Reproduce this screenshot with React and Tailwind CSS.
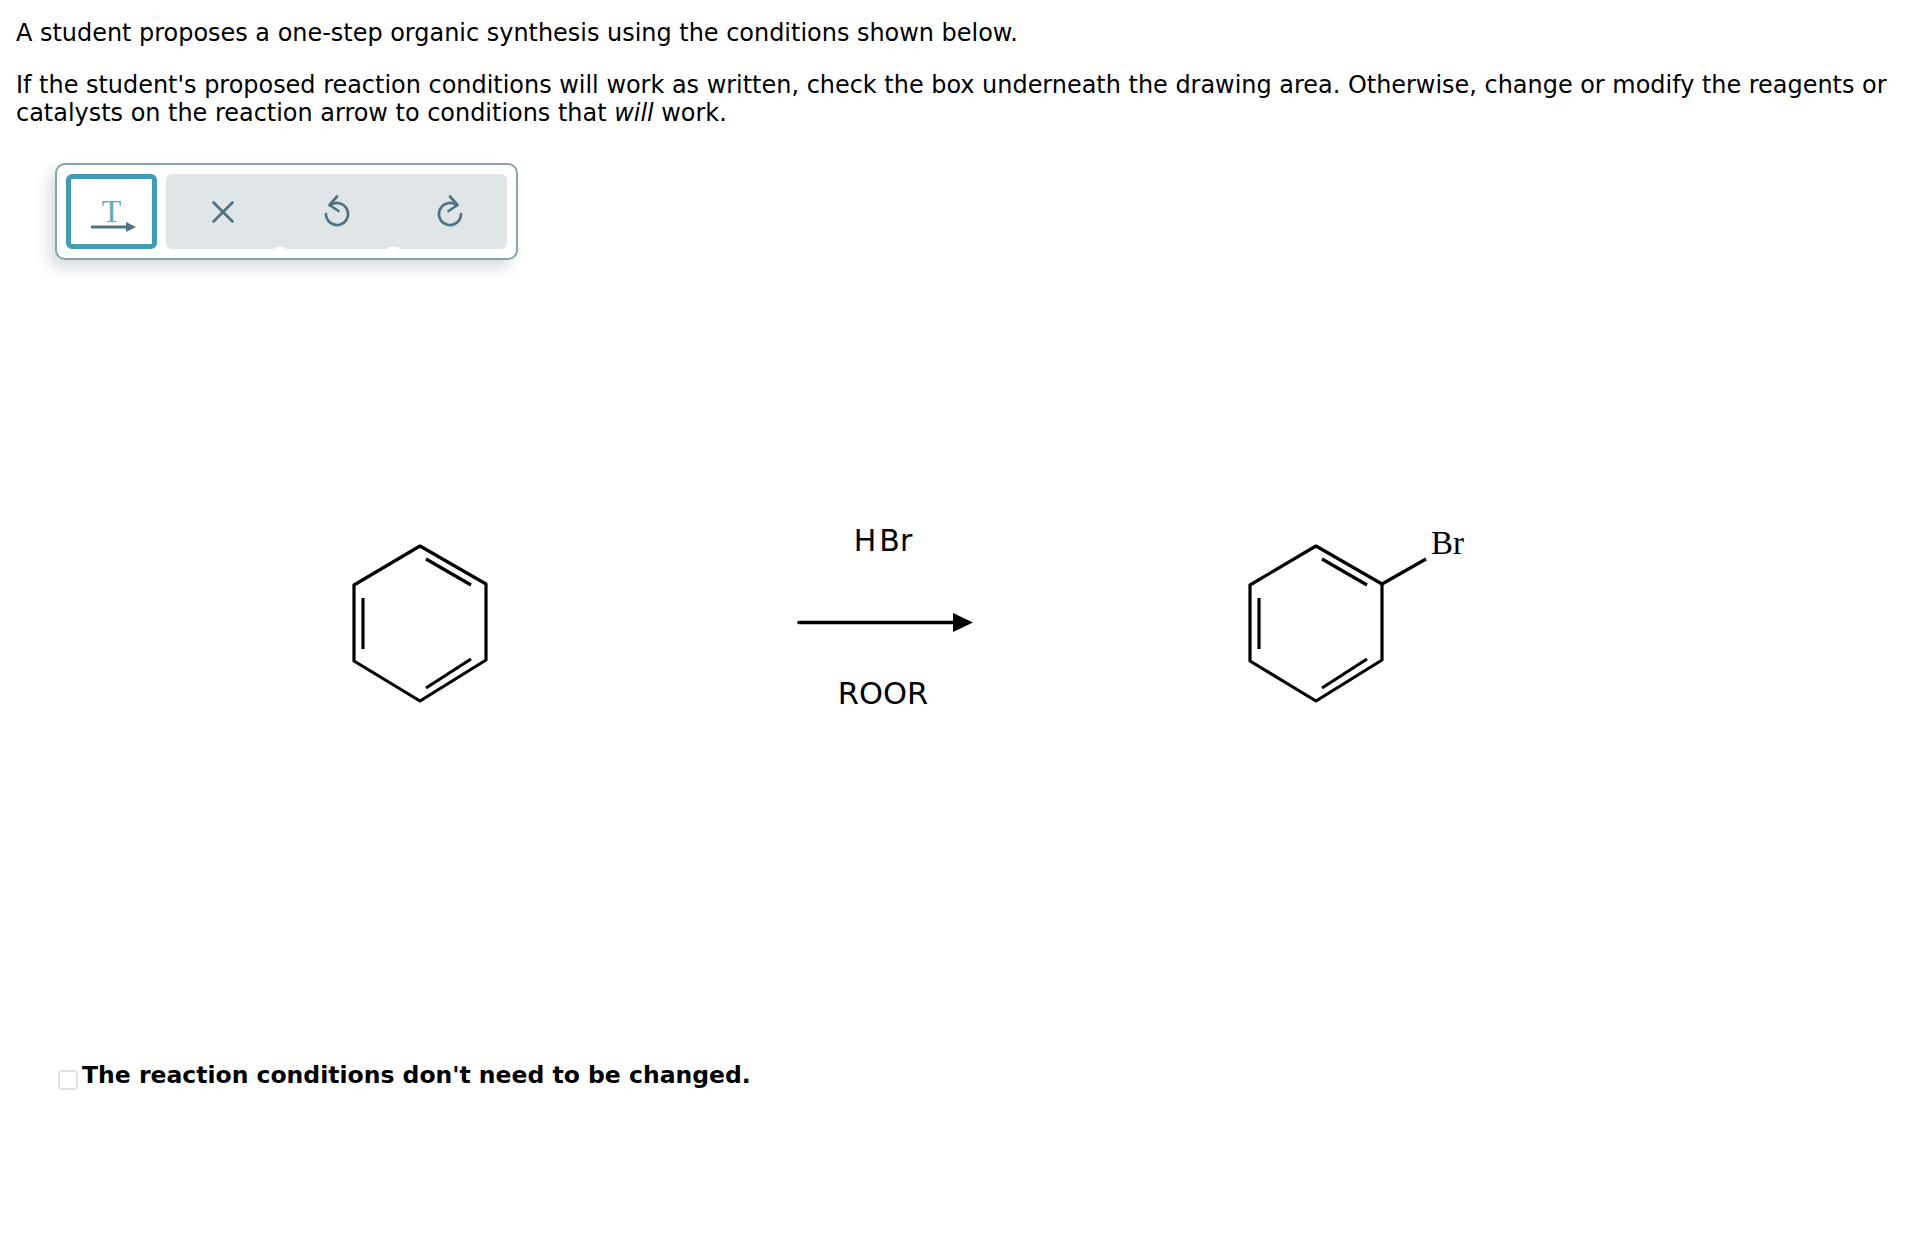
import React from 'react';

const ICON = '#4f7380';

const Hexagon = ({ x }) => (
  <g transform={`translate(${x} 0)`} fill="none" stroke="#000" strokeWidth="3.2" strokeLinejoin="round">
    <path d="M0 545 L66 583 L66 659 L0 700 L-66 660 L-66 584 Z" />
    <path d="M6 558 L51 584" />
    <path d="M-57 597 L-57 648" />
    <path d="M6 687 L51 658" />
  </g>
);

const ReactionCanvas = () => (
  <svg width="1926" height="801" viewBox="0 259 1926 801" className="block">
    <Hexagon x={420} />
    <path d="M799 621.5 L955 621.5" stroke="#000" strokeWidth="3.6" strokeLinecap="round" />
    <path d="M953 612 L973 621.5 L953 631 Z" fill="#000" />
    <text x="883" y="550" textAnchor="middle" fontFamily="'DejaVu Sans', sans-serif" fontSize="30" fill="#000">
      H<tspan dx="3">Br</tspan>
    </text>
    <text x="883" y="703" textAnchor="middle" fontFamily="'DejaVu Sans', sans-serif" fontSize="30.5" fill="#000">ROOR</text>
    <Hexagon x={1316} />
    <path d="M1382 583 L1426 558" stroke="#000" strokeWidth="3.2" />
    <text x="1431" y="553" fontFamily="'Liberation Serif', serif" fontSize="33" fill="#000">Br</text>
  </svg>
);

const ToolIcon = ({ children }) => (
  <div className="flex-1 h-full flex items-center justify-center">
    <svg width="40" height="44" viewBox="-20 -22 40 44" fill="none" stroke={ICON} strokeWidth="2.7" strokeLinecap="round" strokeLinejoin="round">
      {children}
    </svg>
  </div>
);

const App = () => (
  <div className="w-[1926px] h-[1250px] bg-white overflow-hidden text-black font-['DejaVu_Sans',sans-serif]">
    <div className="px-4 pt-[19px] text-[23.95px] leading-[28px]">
      <p>A student proposes a one-step organic synthesis using the conditions shown below.</p>
      <p className="mt-6">
        If the student's proposed reaction conditions will work as written, check the box underneath the drawing area. Otherwise, change or modify the reagents or catalysts on the reaction arrow to conditions that <em>will</em> work.
      </p>
    </div>

    <div className="ml-[55px] mt-[36px] w-[463px] h-[97px] pt-[9px] px-[9px] flex gap-[9px] bg-white border-2 border-[#8aa2ad] rounded-[10px] shadow-[-6px_8px_14px_rgba(70,90,100,0.2)]">
      <div className="w-[91px] h-[75px] border-[5px] border-[#439cb7] rounded-[6px] flex flex-col items-center bg-white">
        <span className="font-['Liberation_Serif',serif] text-[#55aec8] text-[32px] leading-[24px] mt-[20px]">T</span>
        <svg width="46" height="12" viewBox="0 0 46 12" className="-mt-[2px] ml-[4px]">
          <path d="M0 6 L36 6" stroke={ICON} strokeWidth="3" />
          <path d="M35 1 L45 6 L35 11 Z" fill={ICON} />
        </svg>
      </div>
      <div className="relative flex-1 h-[75px] flex bg-[#e0e5e7] rounded-[6px]">
        <ToolIcon>
          <path d="M-9.5 -9.5 L9.5 9.5 M9.5 -9.5 L-9.5 9.5" />
        </ToolIcon>
        <ToolIcon>
          <path d="M-7 -6.5 A11 11 0 1 1 -11 2" />
          <path d="M0 -15.5 L-7.5 -7 L1.5 -1" />
        </ToolIcon>
        <ToolIcon>
          <path d="M7 -6.5 A11 11 0 1 0 11 2" />
          <path d="M0 -15.5 L7.5 -7 L-1.5 -1" />
        </ToolIcon>
        <span className="absolute bottom-0 left-[108px] w-3 h-[2px] rounded-t-full bg-white" />
        <span className="absolute bottom-0 left-[221px] w-3 h-[2px] rounded-t-full bg-white" />
      </div>
    </div>

    <ReactionCanvas />

    <label className="ml-[58px] flex items-start gap-[4px]">
      <span className="mt-[9px] w-5 h-5 rounded-[4px] border-2 border-[#e0e0e0] bg-white shrink-0" />
      <span className="font-bold text-[23.5px] leading-[28px]">The reaction conditions don't need to be changed.</span>
    </label>
  </div>
);

export default App;
